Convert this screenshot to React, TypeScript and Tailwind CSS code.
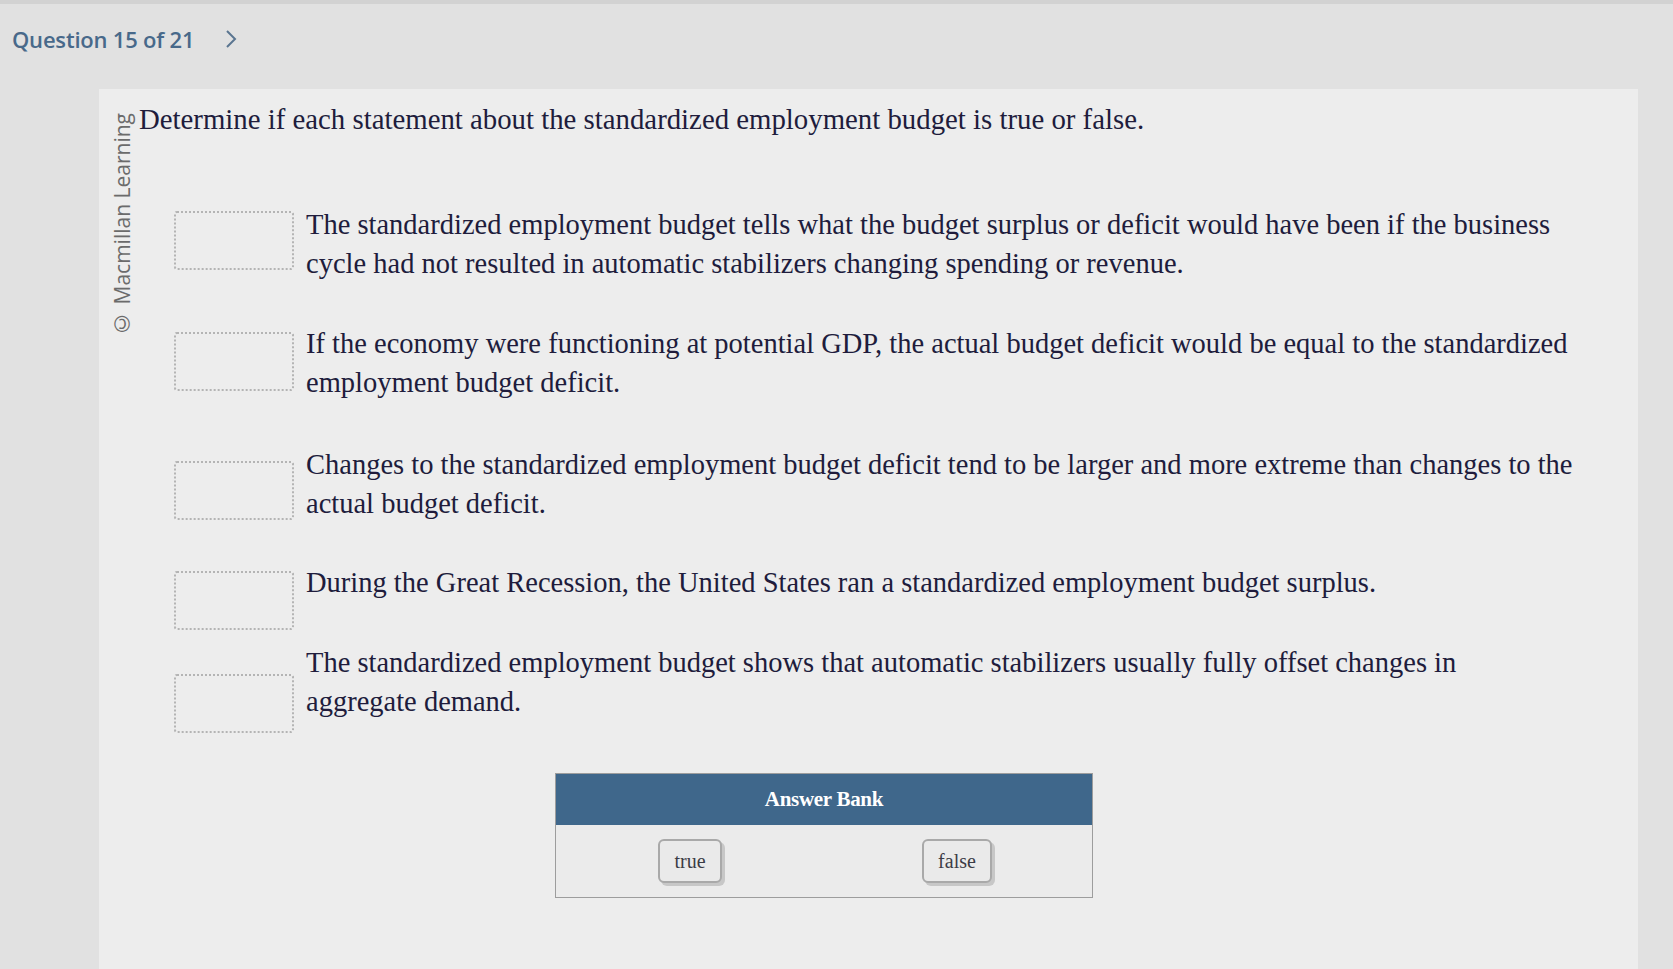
import React from 'react';

export default function App() {
  const statements = [
    {
      text: 'The standardized employment budget tells what the budget surplus or deficit would have been if the business cycle had not resulted in automatic stabilizers changing spending or revenue.',
      row: 'mt-[68px]',
      box: 'mt-[6px]',
      w: 'w-[1272px]',
    },
    {
      text: 'If the economy were functioning at potential GDP, the actual budget deficit would be equal to the standardized employment budget deficit.',
      row: 'mt-[41px]',
      box: 'mt-[8px]',
      w: 'w-[1272px]',
    },
    {
      text: 'Changes to the standardized employment budget deficit tend to be larger and more extreme than changes to the actual budget deficit.',
      row: 'mt-[43px]',
      box: 'mt-[16px]',
      w: 'w-[1272px]',
    },
    {
      text: 'During the Great Recession, the United States ran a standardized employment budget surplus.',
      row: 'mt-[40px]',
      box: 'mt-[8px]',
      w: 'w-[1272px]',
    },
    {
      text: 'The standardized employment budget shows that automatic stabilizers usually fully offset changes in aggregate demand.',
      row: 'mt-[13px]',
      box: 'mt-[31px]',
      w: 'w-[1220px]',
    },
  ];

  return (
    <div className="w-[1673px] h-[969px] overflow-hidden bg-[#e1e1e1] border-t-[4px] border-[#d2d2d2]">
      <div className="flex items-center pl-[12px] pt-[2px] h-[68px]">
        <span className="text-[22px] text-[#48698a] font-['Open_Sans',sans-serif] font-semibold tracking-[-0.2px]">
          Question 15 of 21
        </span>
        <svg className="ml-[28px] w-[18px] h-[22px]" viewBox="0 0 18 22" fill="none" stroke="#5a7590" strokeWidth={2}>
          <path d="M5 3l8 8-8 8" />
        </svg>
      </div>

      <div className="ml-[99px] mt-[17px] w-[1539px] h-[900px] bg-[#ededed] flex">
        <div className="w-[40px] pl-[8px] pt-[24px]">
          <div className="[writing-mode:vertical-rl] rotate-180 text-[21px] text-[#6b6b6b] font-['Open_Sans',sans-serif] whitespace-nowrap">
            © Macmillan Learning
          </div>
        </div>

        <div className="pt-[12px] font-['Liberation_Serif','Times_New_Roman',serif] text-[#201c3c]">
          <div className="text-[28.8px] leading-[36px]">
            Determine if each statement about the standardized employment budget is true or false.
          </div>

          {statements.map((s, i) => (
            <div key={i} className={`flex items-start ${s.row}`}>
              <div
                className={`ml-[35px] w-[120px] h-[59px] shrink-0 border-[2px] border-dotted border-[#b4b4b4] rounded-[3px] ${s.box}`}
              />
              <div className={`ml-[12px] ${s.w} text-[28.5px] leading-[39px]`}>{s.text}</div>
            </div>
          ))}

          <div className="ml-[416px] mt-[40px] w-[538px] border border-[#9d9d9d] bg-[#ebebeb]">
            <div className="h-[51px] bg-[#3f678b] flex items-center justify-center text-white text-[21px] font-bold tracking-[-0.3px]">
              Answer Bank
            </div>
            <div className="h-[72px] flex items-center">
              <div className="ml-[102px] w-[64px] h-[44px] rounded-[6px] border-[2px] border-[#a9a9a9] bg-[#eaeaea] shadow-[3px_3px_0_#c7c7c7] flex items-center justify-center text-[20px] text-[#3c3c46]">
                true
              </div>
              <div className="ml-[200px] w-[70px] h-[44px] rounded-[6px] border-[2px] border-[#a9a9a9] bg-[#eaeaea] shadow-[3px_3px_0_#c7c7c7] flex items-center justify-center text-[20px] text-[#3c3c46]">
                false
              </div>
            </div>
          </div>
        </div>
      </div>
    </div>
  );
}
